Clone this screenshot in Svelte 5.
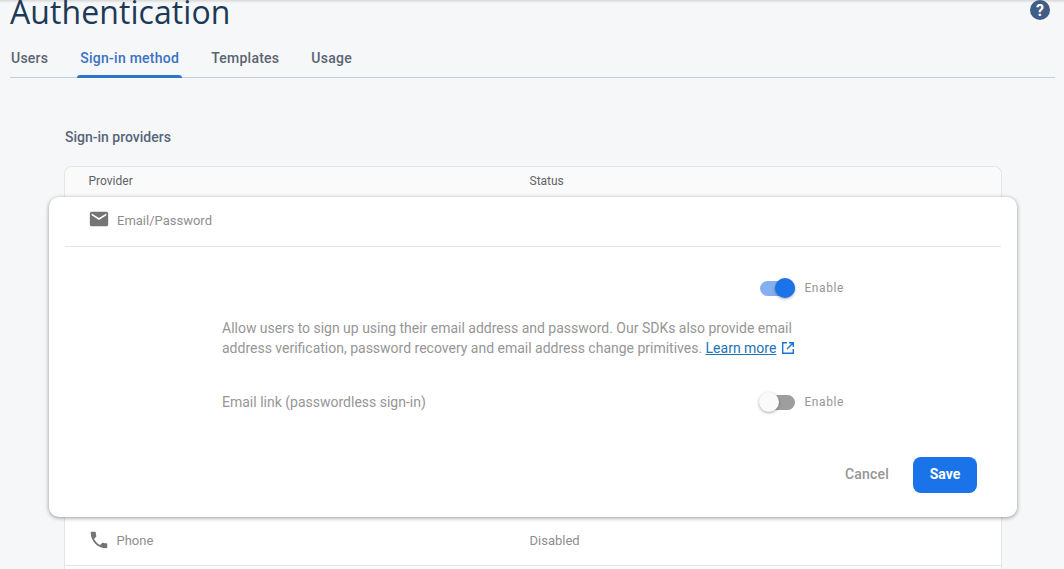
<script>
  const tabs = [
    { label: 'Users' },
    { label: 'Sign-in method', active: true },
    { label: 'Templates' },
    { label: 'Usage' }
  ];
</script>

<div class="page">
  <header class="head">
    <h1>Authentication</h1>
    <svg class="help" viewBox="0 0 20 20" width="20" height="20" aria-hidden="true">
      <circle cx="10" cy="10" r="10" fill="#3f5d85" />
      <text x="10" y="15.700" text-anchor="middle" class="qm">?</text>
    </svg>
  </header>

  <nav class="tabs">
    {#each tabs as t}
      <div class="tab" class:active={t.active}>{t.label}</div>
    {/each}
  </nav>

  <main class="content">
    <h2>Sign-in providers</h2>
    <section class="table">
      <div class="thead">
        <div class="c1">Provider</div>
        <div class="c2">Status</div>
      </div>

      <div class="expanded">
        <div class="exp-head">
          <svg viewBox="0 0 24 24" width="22" height="22" fill="#757575" aria-hidden="true">
            <path d="M20 4H4c-1.100 0-2 .9-2 2v12c0 1.100.9 2 2 2h16c1.100 0 2-.9 2-2V6c0-1.100-.9-2-2-2zm0 4-8 5-8-5V6l8 5 8-5v2z" />
          </svg>
          <span>Email/Password</span>
        </div>
        <div class="exp-body">
          <div class="row toggle-only">
            <div class="toggle on"><span class="track"></span><span class="thumb"></span></div>
            <span class="en">Enable</span>
          </div>
          <p class="desc">
            Allow users to sign up using their email address and password. Our SDKs also provide email
            address verification, password recovery and email address change primitives.
            <a href="#learn">Learn more</a>
            <svg class="ext" viewBox="0 0 14 14" width="14" height="14" fill="none" stroke="#1976d2" stroke-width="1.4" aria-hidden="true">
              <path d="M6 1.700H1.700v10.600h10.600V8M8 1.700h4.300V6M12.300 1.700 6 8" />
            </svg>
          </p>
          <div class="row link-row">
            <span class="lbl">Email link (passwordless sign-in)</span>
            <div class="toggle-wrap">
              <div class="toggle off"><span class="track"></span><span class="thumb"></span></div>
              <span class="en">Enable</span>
            </div>
          </div>
        </div>
        <div class="actions">
          <button class="cancel">Cancel</button>
          <button class="save">Save</button>
        </div>
      </div>

      <div class="trow">
        <div class="c1 prov">
          <svg viewBox="0 0 24 24" width="22" height="22" fill="#757575" aria-hidden="true">
            <path d="M6.620 10.790c1.440 2.830 3.760 5.140 6.590 6.590l2.200-2.200c.27-.27.67-.36 1.020-.24 1.120.37 2.330.57 3.570.57.550 0 1 .45 1 1V20c0 .55-.45 1-1 1-9.390 0-17-7.610-17-17 0-.55.45-1 1-1h3.500c.55 0 1 .45 1 1 0 1.250.2 2.450.57 3.570.11.350.03.740-.25 1.020l-2.200 2.200z" />
          </svg>
          <span>Phone</span>
        </div>
        <div class="c2 status">Disabled</div>
      </div>
    </section>
  </main>
</div>

<style>
  :global(body) {
    margin: 0;
    background: #f6f7f9;
  }
  .page {
    height: 569px;
    overflow: hidden;
    background: linear-gradient(#d8d8da, #f6f7f9 3px);
    font-family: Roboto, "Liberation Sans", sans-serif;
    padding: 0 9px 0 10px;
    box-sizing: border-box;
  }
  .head {
    display: flex;
    justify-content: space-between;
    align-items: flex-start;
    height: 42px;
  }
  h1 {
    margin: -10px 0 0;
    font-family: "Open Sans", Roboto, sans-serif;
    font-size: 32px;
    line-height: 44px;
    font-weight: 400;
    letter-spacing: .07px;
    color: #1c3a57;
    white-space: nowrap;
  }
  .help {
    margin: 0 5px 0 0;
  }
  .qm {
    font: 700 16px Roboto, sans-serif;
    fill: #fff;
  }
  .tabs {
    display: flex;
    height: 35px;
    padding-left: 1px;
    border-bottom: 1px solid #c5ced8;
  }
  .tab {
    position: relative;
    font-size: 14px;
    font-weight: 500;
    line-height: 33px;
    letter-spacing: .25px;
    color: #5a6472;
    margin-right: 32px;
  }
  .tab.active {
    color: #3b72c4;
  }
  .tab.active::after {
    content: "";
    position: absolute;
    left: -3px;
    right: -3px;
    bottom: -1px;
    height: 3px;
    border-radius: 3px 3px 0 0;
    background: #2e74c9;
  }
  .content {
    padding: 0 53px 0 54px;
  }
  h2 {
    margin: 50px 0 20px 1px;
    font-size: 14px;
    line-height: 18px;
    font-weight: 500;
    color: #566579;
  }
  .table {
    background: #fff;
    border: 1px solid #e3e5e8;
    border-bottom: 0;
    border-radius: 8px 8px 0 0;
    height: 420px;
  }
  .thead {
    display: flex;
    height: 30px;
    padding-bottom: 2px;
    box-sizing: border-box;
    align-items: center;
    background: #fafafa;
    border-radius: 8px 8px 0 0;
    font-size: 12px;
    color: #5f6368;
  }
  .c1 {
    width: 464.500px;
    padding-left: 23.500px;
    box-sizing: border-box;
  }
  .expanded {
    position: relative;
    margin: 0 -16px;
    height: 320px;
    background: #fff;
    border-radius: 10px;
    box-shadow: 0 1px 4px rgba(0, 0, 0, .4);
    display: flex;
    flex-direction: column;
    box-sizing: border-box;
    padding: 0 16px;
  }
  .exp-head {
    display: flex;
    align-items: center;
    gap: 6px;
    height: 50px;
    padding: 0 0 3px 23px;
    box-sizing: border-box;
    border-bottom: 1px solid #e3e5e8;
    font-size: 13px;
    color: #8e8e8e;
  }
  .exp-head span {
    margin-left: 1px;
  }
  .exp-head svg {
    margin-top: -3px;
  }
  .exp-body {
    padding: 0 0 0 157px;
    width: 622px;
    box-sizing: content-box;
    color: #969696;
  }
  .row {
    display: flex;
    align-items: center;
  }
  .toggle-only {
    justify-content: flex-end;
    height: 24px;
    margin-top: 29px;
  }
  .toggle {
    position: relative;
    width: 36px;
    height: 20px;
    margin-right: 9px;
  }
  .track {
    position: absolute;
    left: 1px;
    right: 0;
    top: 3px;
    height: 15px;
    border-radius: 8px;
  }
  .thumb {
    position: absolute;
    top: 0;
    width: 20px;
    height: 20px;
    border-radius: 50%;
    box-shadow: 0 1px 3px rgba(0, 0, 0, .35);
  }
  .on .track {
    background: #85b0f0;
  }
  .on .thumb {
    right: 0;
    background: #1a73e8;
  }
  .off .track {
    background: #9e9e9e;
  }
  .off .thumb {
    left: 0;
    background: #fafafa;
  }
  .en {
    font-size: 12px;
    color: #969696;
    letter-spacing: .6px;
  }
  .desc {
    margin: 18px 0 0;
    font-size: 14px;
    line-height: 20px;
    color: #969696;
    width: 590px;
    word-spacing: -.05px;
  }
  .desc a {
    color: #2273b5;
    text-decoration: underline;
  }
  .ext {
    vertical-align: -2px;
    margin-left: 1px;
  }
  .link-row {
    justify-content: space-between;
    margin-top: 32px;
    height: 24px;
  }
  .lbl {
    font-size: 14px;
    color: #969696;
  }
  .toggle-wrap {
    display: flex;
    align-items: center;
  }
  .actions {
    display: flex;
    justify-content: flex-end;
    align-items: center;
    gap: 24px;
    margin-top: 43px;
    padding-right: 24px;
  }
  .cancel {
    border: 0;
    background: none;
    padding: 0 0 2px;
    font: 500 14px Roboto, sans-serif;
    letter-spacing: .2px;
    color: #969696;
  }
  .save {
    width: 64px;
    height: 36px;
    border: 0;
    padding: 0 0 2px;
    border-radius: 8px;
    background: #1a73e8;
    color: #fff;
    font: 700 14px Roboto, sans-serif;
  }
  .trow {
    display: flex;
    align-items: center;
    height: 49px;
    padding-bottom: 1px;
    box-sizing: border-box;
    border-bottom: 1px solid #e3e5e8;
    font-size: 13px;
    color: #8e8e8e;
  }
  .prov {
    display: flex;
    align-items: center;
    gap: 6px;
  }
  .prov svg {
    margin: -2px 0 0 -.5px;
  }
  .prov span {
    margin-left: .5px;
  }
  .status {
    font-size: 13px;
  }
</style>
